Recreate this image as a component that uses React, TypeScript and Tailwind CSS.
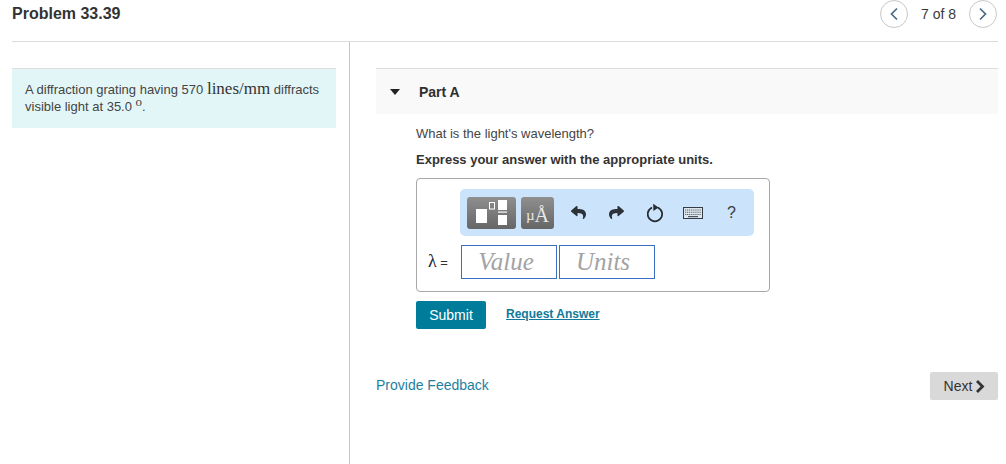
import React from "react";
import { FaReply, FaShare } from "react-icons/fa";

const sans = "font-['Liberation_Sans',Arial,sans-serif]";
const serif = "font-['Liberation_Serif','Times_New_Roman',serif]";

function Chevron({ dir }: { dir: "l" | "r" }) {
  return (
    <svg width="10" height="14" viewBox="0 0 10 14" fill="none" stroke="#4a6a85" strokeWidth="1.7">
      <path d={dir === "l" ? "M8 1.5 2.5 7 8 12.5" : "M2 1.5 7.5 7 2 12.5"} />
    </svg>
  );
}

function Round({ dir }: { dir: "l" | "r" }) {
  return (
    <div className="w-[28px] h-[28px] rounded-full border border-[#c8c8c8] bg-white flex items-center justify-center">
      <Chevron dir={dir} />
    </div>
  );
}

function TemplatesIcon() {
  return (
    <svg width="31" height="25" viewBox="0 0 31 25" fill="none">
      <rect x="0" y="9" width="11" height="14" fill="#fff" />
      <rect x="13.5" y="2.5" width="5" height="6.5" stroke="#fff" strokeWidth="1" />
      <rect x="22" y="0" width="9" height="10" fill="#fff" />
      <rect x="22" y="11.5" width="9" height="1.2" fill="#fff" />
      <rect x="22" y="15" width="9" height="10" fill="#fff" />
    </svg>
  );
}

function KeyboardIcon() {
  return (
    <svg width="20" height="12" viewBox="0 0 20 12">
      <rect x="0.5" y="0.5" width="19" height="11" fill="#dfe7ee" stroke="#333c45" />
      <path d="M2 3h16M2 5.3h16M2 7.5h16" stroke="#5b6670" strokeWidth="1.1" strokeDasharray="1.2 0.7" />
      <path d="M5 9.6h10" stroke="#4a545e" strokeWidth="1.2" />
    </svg>
  );
}

function ResetIcon() {
  return (
    <svg width="17" height="20" viewBox="0 0 18 20" fill="none">
      <path d="M11.4 4.2A7.6 7.6 0 1 1 5.4 4.2" stroke="#262c33" strokeWidth="1.9" />
      <path d="M6.5 0.3 12.2 4.2 6.8 7.8Z" fill="#262c33" />
    </svg>
  );
}

export default function App() {
  return (
    <div className={`${sans} w-[1006px] h-[464px] bg-white overflow-hidden flex flex-col text-[#333]`}>
      <header className="h-[42px] ml-3 mr-2 pr-[1px] border-b border-[#dcdcdc] flex items-start justify-between shrink-0">
        <h1 className="text-[16px] leading-[18px] font-bold mt-[5px]">Problem 33.39</h1>
        <div className="flex items-center">
          <Round dir="l" />
          <span className="text-[14px] leading-[28px] w-[61px] text-center text-[#3a3a3a]">7 of 8</span>
          <Round dir="r" />
        </div>
      </header>

      <div className="flex flex-1 min-h-0">
        <aside className="w-[338px] ml-3 pt-[26px] border-r border-[#c8c8c8] shrink-0">
          <div className="w-[324px] h-[60px] bg-[#e3f6f7] border-t border-[#dcdcdc] pl-[13px] pr-[8px] pt-[11px] text-[13px] leading-[17px] text-[#444]">
            A diffraction grating having 570{" "}
            <span className={`${serif} text-[17px] leading-none text-[#333]`}>lines/mm</span> diffracts visible light at 35.0{" "}
            <span className={`${serif} text-[13px] leading-none relative top-[-5px]`}>o</span>.
          </div>
        </aside>

        <main className="flex-1 min-w-0 pl-[26px] pr-2 pt-[26px] flex flex-col">
          <div className="h-[46px] bg-[#f9f9f9] border-t border-[#dcdcdc] flex items-center pl-[14px]">
            <div className="w-0 h-0 border-x-[5.5px] border-x-transparent border-t-[6px] border-t-[#222]" />
            <span className="ml-[18px] pl-[1px] pt-[2px] text-[14px] font-bold text-[#2f2f2f]">Part A</span>
          </div>

          <div className="pl-[40px]">
            <p className="mt-[11px] text-[13px] leading-[17px] text-[#444]">What is the light's wavelength?</p>
            <p className="mt-[9px] text-[13px] leading-[17px] font-bold text-[#333]">Express your answer with the appropriate units.</p>

            <div className="mt-[10px] w-[354px] h-[114px] border border-[#a8a8a8] rounded-[4px] pt-[10px] pl-[43px]">
              <div className="w-[294px] h-[47px] bg-[#cbe4fb] rounded-[5px] flex items-center pl-[7px]">
                <div className="w-[49px] h-[32px] rounded-[3px] bg-gradient-to-b from-[#8f8f8f] to-[#666] flex items-center justify-center">
                  <TemplatesIcon />
                </div>
                <div className={`${serif} ml-[5px] w-[33px] h-[32px] rounded-[3px] bg-gradient-to-b from-[#8f8f8f] to-[#666] flex items-end justify-center pb-[3px] text-[#e8e8e8] leading-[22px]`}>
                  <span className="text-[15px]">µ</span>
                  <span className="text-[20px]">Å</span>
                </div>
                <div className="ml-[16px] w-[16px] flex justify-center text-[#2c3238]"><FaReply size={15} /></div>
                <div className="ml-[22px] w-[16px] flex justify-center text-[#2c3238]"><FaShare size={15} /></div>
                <div className="ml-[22px] w-[18px] flex justify-center"><ResetIcon /></div>
                <div className="ml-[19px]"><KeyboardIcon /></div>
                <div className="ml-[24px] text-[16px] text-[#3a3a3a]">?</div>
              </div>

              <div className="flex items-center mt-[9px] -ml-[32px]">
                <span className="w-[33px] text-[13px] text-[#333]">
                  <span className={`${serif} text-[18px] leading-none text-[#223]`}>λ</span> =
                </span>
                <div className={`${serif} w-[96px] h-[34px] border border-[#3a6fc4] flex items-center justify-center pr-[6px] italic text-[25px] text-[#a3a3a3]`}>
                  Value
                </div>
                <div className={`${serif} ml-[2px] w-[96px] h-[34px] border border-[#3a6fc4] flex items-center justify-center pr-[8px] italic text-[25px] text-[#a3a3a3]`}>
                  Units
                </div>
              </div>
            </div>

            <div className="mt-[9px] flex items-start">
              <div className="w-[70px] h-[28px] bg-[#007c9b] rounded-[2px] text-white text-[14px] flex items-center justify-center">
                Submit
              </div>
              <span className="ml-[20px] mt-[6px] text-[12px] leading-[15px] font-bold text-[#0f7a99] underline">Request Answer</span>
            </div>
          </div>

          <div className="mt-[43px] flex items-center justify-between">
            <span className="text-[14px] relative top-[-1px] text-[#1d7fa0]">Provide Feedback</span>
            <div className="w-[68px] h-[28px] bg-[#d9d9d9] rounded-[2px] pl-[1px] text-[14px] text-[#333] flex items-center justify-center gap-[3px]">
              Next
              <svg width="10" height="13" viewBox="0 0 10 13" fill="none" stroke="#333" strokeWidth="2.8">
                <path d="M2 1 7.5 6.5 2 12" />
              </svg>
            </div>
          </div>
        </main>
      </div>
    </div>
  );
}
